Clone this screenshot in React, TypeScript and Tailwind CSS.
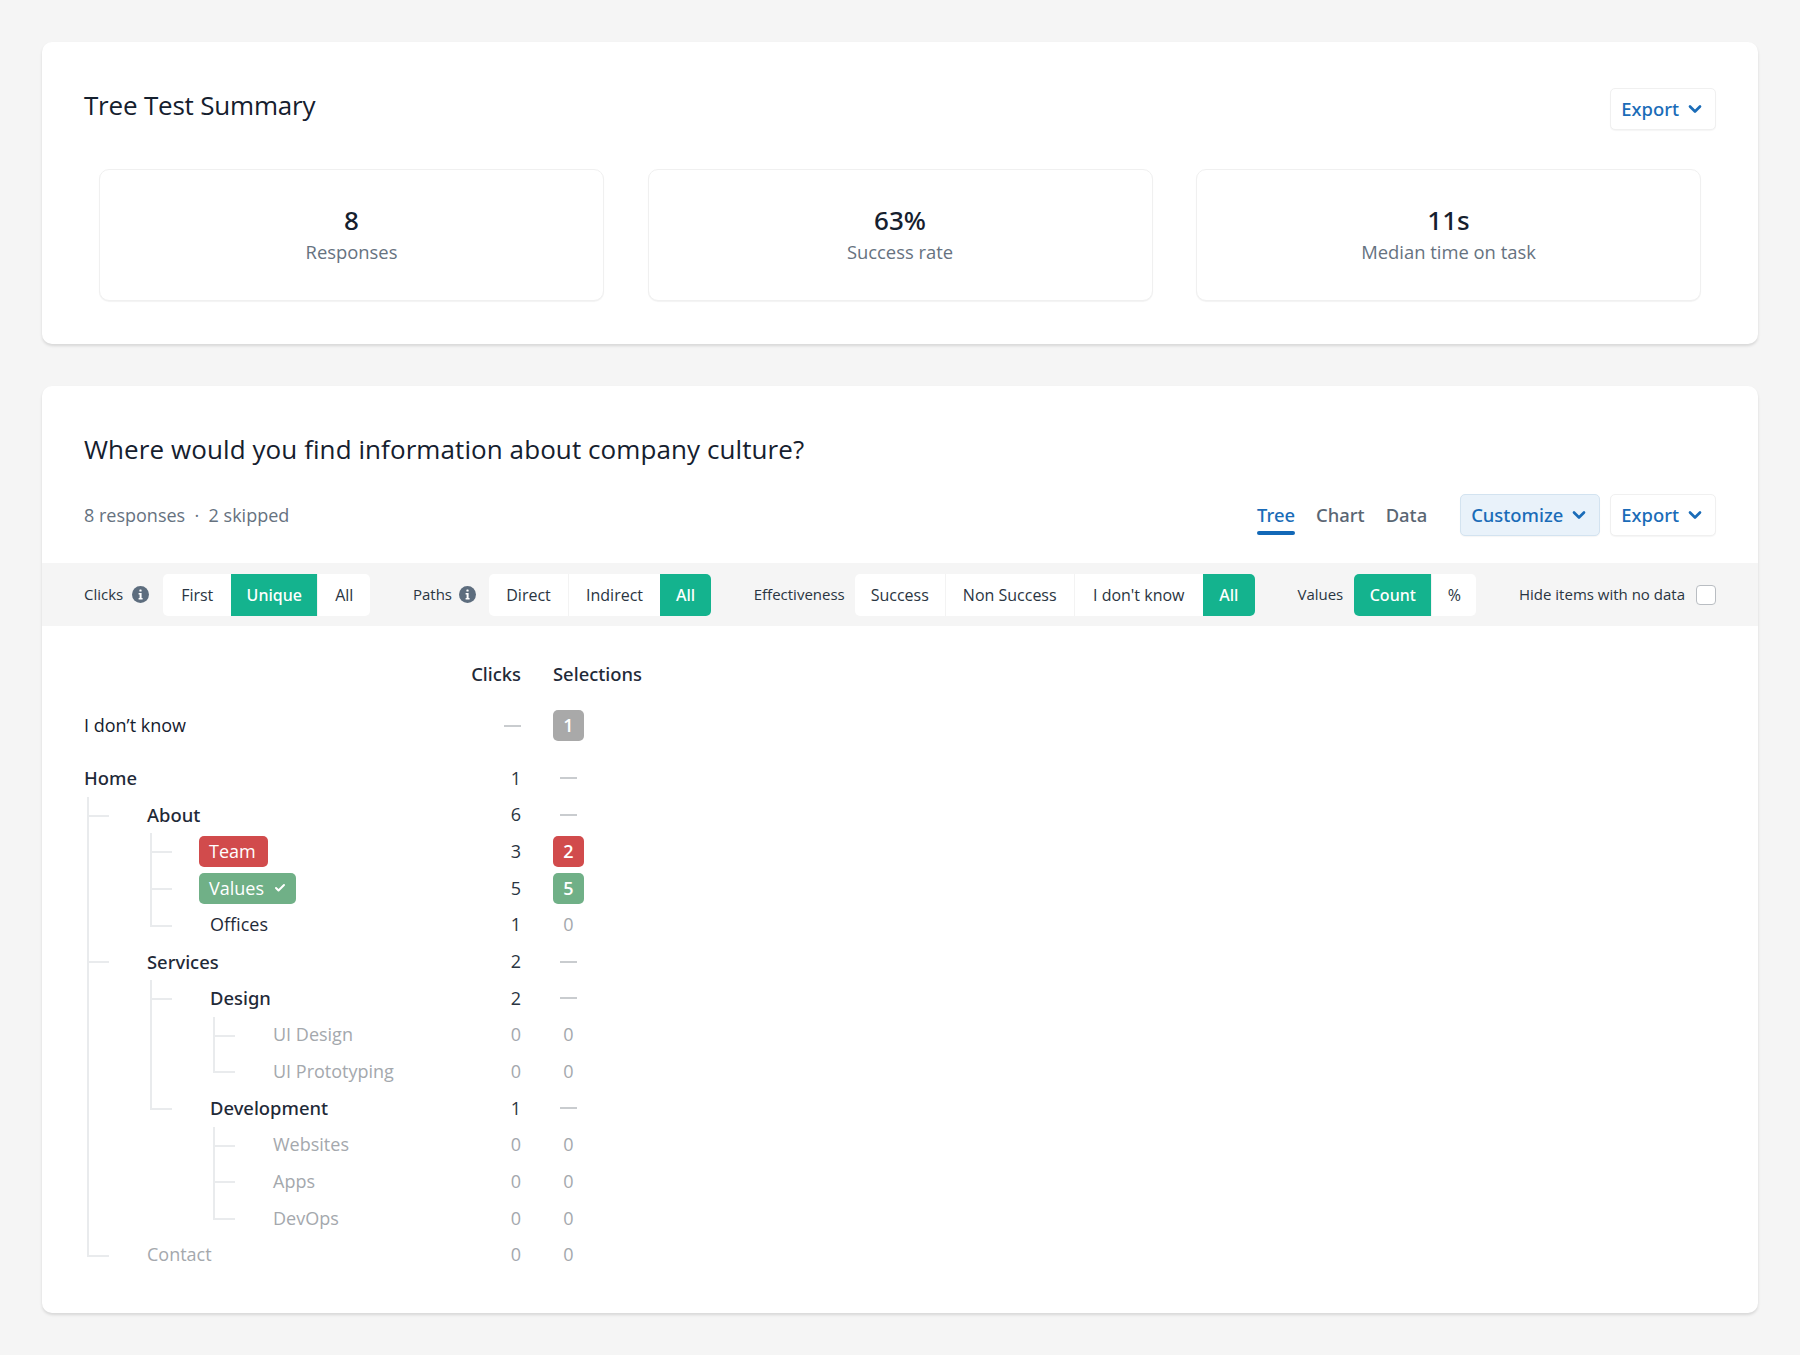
import { Check, ChevronDown } from "lucide-react";

type TreeItem = {
    label: string;
    clicks: number;
    selections: number | null;
    status?: "wrong" | "right";
    muted?: boolean;
    children?: TreeItem[];
};

const tree: TreeItem[] = [
    {
        label: "About",
        clicks: 6,
        selections: null,
        children: [
            { label: "Team", clicks: 3, selections: 2, status: "wrong" },
            { label: "Values", clicks: 5, selections: 5, status: "right" },
            { label: "Offices", clicks: 1, selections: 0 },
        ],
    },
    {
        label: "Services",
        clicks: 2,
        selections: null,
        children: [
            {
                label: "Design",
                clicks: 2,
                selections: null,
                children: [
                    { label: "UI Design", clicks: 0, selections: 0, muted: true },
                    { label: "UI Prototyping", clicks: 0, selections: 0, muted: true },
                ],
            },
            {
                label: "Development",
                clicks: 1,
                selections: null,
                children: [
                    { label: "Websites", clicks: 0, selections: 0, muted: true },
                    { label: "Apps", clicks: 0, selections: 0, muted: true },
                    { label: "DevOps", clicks: 0, selections: 0, muted: true },
                ],
            },
        ],
    },
    { label: "Contact", clicks: 0, selections: 0, muted: true },
];

function InfoIcon() {
    return (
        <svg viewBox="0 0 17 17" className="h-[17px] w-[17px] shrink-0">
            <circle cx="8.5" cy="8.5" r="8.5" fill="#5d6d7e" />
            <rect x="7.4" y="3.4" width="2.2" height="2.2" rx="0.6" fill="#fff" />
            <path d="M6.6 7h3v5h1v1.6H6.6V12h1v-3.4h-1z" fill="#fff" />
        </svg>
    );
}

function MenuButton({ label, active }: { label: string; active?: boolean }) {
    return (
        <button
            className={`flex h-[42px] items-center gap-[6px] rounded-[5px] border px-[10px] font-['Noto_Sans',sans-serif] text-[18.4px] font-medium text-[#1a6cb8] shadow-[0_1px_1px_rgba(0,0,0,0.04)] ${
                active ? "border-[#d3e3f0] bg-[#e9f2fa]" : "border-[#f0f0f0] bg-white"
            }`}
        >
            {label}
            <ChevronDown className="h-[20px] w-[20px]" strokeWidth={3.2} />
        </button>
    );
}

function Stat({ value, label }: { value: string; label: string }) {
    return (
        <div className="flex h-[132px] w-[505px] flex-col items-center justify-center rounded-[10px] border border-[#f0f0f0] bg-white shadow-[0_1px_1px_rgba(0,0,0,0.05)]">
            <div className="-mt-[3px] font-['Noto_Sans',sans-serif] text-[26px] leading-[36px] font-medium text-[#15202e]">
                {value}
            </div>
            <div className="text-[18.4px] leading-[27px] text-[#66727f]">{label}</div>
        </div>
    );
}

function Segmented({ options, active, widths }: { options: string[]; active: string; widths: string[] }) {
    return (
        <div className="flex h-[42px] overflow-hidden rounded-[5px] bg-white">
            {options.map((option, i) => (
                <div
                    key={option}
                    className={`flex items-center justify-center text-[16px] ${widths[i]} ${
                        option === active
                            ? "bg-[#14b38e] font-['Noto_Sans',sans-serif] font-medium text-white"
                            : `text-[#2a3542] ${i > 0 ? "border-l border-[#f3f3f3]" : ""}`
                    }`}
                >
                    {option}
                </div>
            ))}
        </div>
    );
}

function Dash() {
    return <div className="h-[2px] w-[17px] bg-[#c9cccf]" />;
}

function Row({ item }: { item: TreeItem }) {
    const color = item.muted ? "text-[#a4a8ad]" : "text-[#1f2a38]";
    // items that hold children are set heavier than the leaves
    const weight = item.selections === null ? "font-['Noto_Sans',sans-serif] text-[18.4px] font-medium" : "font-normal";
    return (
        <div className="flex h-[36.67px] items-center text-[18px]">
            <div className="flex-1">
                {item.status === "wrong" && (
                    <span className="-ml-[11px] inline-flex h-[31px] items-center rounded-[5px] bg-[#d14b4c] pr-[12px] pl-[10px] text-white">
                        {item.label}
                    </span>
                )}
                {item.status === "right" && (
                    <span className="-ml-[11px] inline-flex h-[31px] items-center gap-[10px] rounded-[5px] bg-[#70b087] px-[10px] text-white">
                        {item.label}
                        <Check className="h-[12px] w-[12px]" strokeWidth={4} />
                    </span>
                )}
                {!item.status && <span className={`${color} ${weight}`}>{item.label}</span>}
            </div>
            <div className={`w-[20px] text-right ${item.clicks === 0 ? "text-[#a4a8ad]" : "text-[#2a3542]"}`}>
                {item.clicks}
            </div>
            <div className="ml-[32px] flex w-[31px] justify-center">
                {item.selections === null ? (
                    <Dash />
                ) : item.status ? (
                    <span
                        className={`flex h-[31px] w-[31px] items-center justify-center rounded-[5px] font-semibold text-white ${
                            item.status === "wrong" ? "bg-[#d14b4c]" : "bg-[#70b087]"
                        }`}
                    >
                        {item.selections}
                    </span>
                ) : (
                    <span className="text-[#a4a8ad]">{item.selections}</span>
                )}
            </div>
        </div>
    );
}

function Branch({ items }: { items: TreeItem[] }) {
    return (
        <div className="ml-[3px] pl-[60px]">
            {items.map((item, i) => {
                const last = i === items.length - 1;
                return (
                    <div key={item.label} className="relative">
                        {/* connector lines */}
                        <div
                            className={`absolute top-0 left-[-60px] w-[2px] bg-[#e9ebed] ${
                                last ? "h-[19px]" : "h-full"
                            }`}
                        />
                        <div className="absolute top-[18px] left-[-60px] h-[2px] w-[22px] bg-[#e9ebed]" />
                        <Row item={item} />
                        {item.children && <Branch items={item.children} />}
                    </div>
                );
            })}
        </div>
    );
}

export default function App() {
    return (
        <div className="min-h-[1355px] bg-[#f5f5f5] px-[42px] pt-[42px] font-['Open_Sans',sans-serif] text-[#15202e]">
            <section className="h-[302px] rounded-[10px] bg-white px-[42px] pt-[45px] shadow-[0_2px_3px_rgba(0,0,0,0.12)]">
                <div className="flex items-start justify-between">
                    <h1 className="text-[26px] leading-[36px] font-normal tracking-[-0.2px]">Tree Test Summary</h1>
                    <div className="mt-[1px]">
                        <MenuButton label="Export" />
                    </div>
                </div>
                <div className="mt-[39px] flex justify-between px-[15px]">
                    <Stat value="8" label="Responses" />
                    <Stat value="63%" label="Success rate" />
                    <Stat value="11s" label="Median time on task" />
                </div>
            </section>

            <section className="mt-[42px] h-[927px] rounded-[10px] bg-white pt-[45px] shadow-[0_2px_3px_rgba(0,0,0,0.12)]">
                <h2 className="px-[42px] text-[26px] leading-[36px] font-normal tracking-[0.08px]">
                    Where would you find information about company culture?
                </h2>
                <div className="mt-[27px] flex h-[42px] items-center justify-between px-[42px]">
                    <div className="text-[18px] text-[#66727f]">8 responses &nbsp;·&nbsp; 2 skipped</div>
                    <div className="flex items-center font-['Noto_Sans',sans-serif] text-[18.4px] font-medium">
                        <div className="relative text-[#1a6cb8]">
                            Tree
                            <div className="absolute right-0 bottom-[-6px] left-0 h-[4px] rounded-[2px] bg-[#1268b7]" />
                        </div>
                        <div className="ml-[21px] text-[#5a6673]">Chart</div>
                        <div className="ml-[21px] text-[#5a6673]">Data</div>
                        <div className="ml-[33px]">
                            <MenuButton label="Customize" active />
                        </div>
                        <div className="ml-[10px]">
                            <MenuButton label="Export" />
                        </div>
                    </div>
                </div>

                <div className="mt-[27px] flex h-[63px] items-center justify-between bg-[#f5f5f5] px-[42px] text-[15px] text-[#2a3542]">
                    <div className="flex items-center">
                        <span>Clicks</span>
                        <span className="mr-[14px] ml-[9px]"><InfoIcon /></span>
                        <Segmented options={["First", "Unique", "All"]} active="Unique" widths={["w-[68px]", "w-[86px]", "w-[53px]"]} />
                    </div>
                    <div className="flex items-center">
                        <span>Paths</span>
                        <span className="mr-[13px] ml-[7px]"><InfoIcon /></span>
                        <Segmented options={["Direct", "Indirect", "All"]} active="All" widths={["w-[79px]", "w-[92px]", "w-[51px]"]} />
                    </div>
                    <div className="flex items-center gap-[10px]">
                        <span>Effectiveness</span>
                        <Segmented
                            options={["Success", "Non Success", "I don't know", "All"]}
                            active="All"
                            widths={["w-[90px]", "w-[129px]", "w-[129px]", "w-[52px]"]}
                        />
                    </div>
                    <div className="flex items-center gap-[11px]">
                        <span>Values</span>
                        <Segmented options={["Count", "%"]} active="Count" widths={["w-[77px]", "w-[45px]"]} />
                    </div>
                    <div className="flex items-center gap-[11px]">
                        <span>Hide items with no data</span>
                        <div className="h-[20px] w-[20px] rounded-[4px] border border-[#b9bdc2] bg-white" />
                    </div>
                </div>

                <div className="ml-[42px] w-[500px] pt-[30px]">
                    <div className="flex h-[36px] items-center justify-end font-['Noto_Sans',sans-serif] text-[18.4px] font-medium text-[#1f2a38]">
                        <div>Clicks</div>
                        <div className="ml-[32px] w-[31px] overflow-visible whitespace-nowrap">Selections</div>
                    </div>
                    <div className="mt-[9px] flex h-[49px] items-center text-[18px]">
                        <div className="flex-1">I don’t know</div>
                        <div className="flex w-[20px] justify-end"><Dash /></div>
                        <div className="ml-[32px] flex h-[31px] w-[31px] items-center justify-center rounded-[5px] bg-[#a9a9a9] font-semibold text-white">
                            1
                        </div>
                    </div>
                    <div className="mt-[10px]">
                        <Row item={{ label: "Home", clicks: 1, selections: null }} />
                        <Branch items={tree} />
                    </div>
                </div>
            </section>
        </div>
    );
}
